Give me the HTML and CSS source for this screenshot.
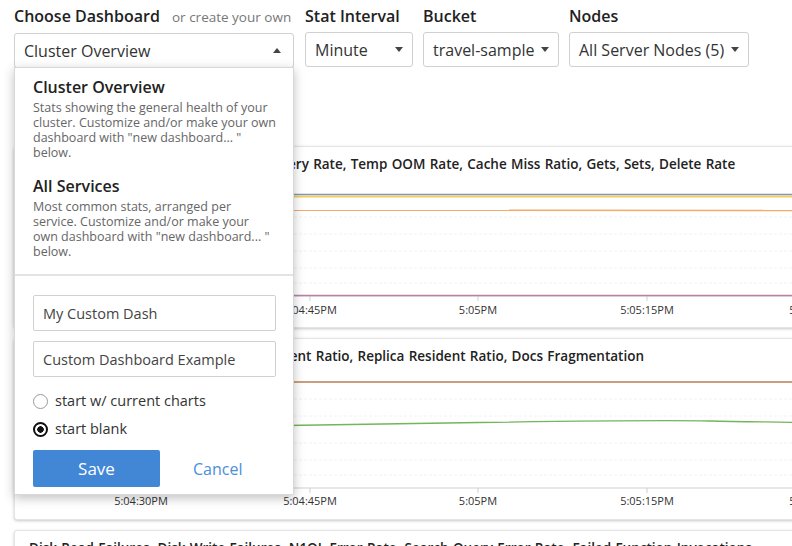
FILE: index.html
```html
<!DOCTYPE html>
<html lang="en">

<head>
    <meta charset="UTF-8">
    <meta name="viewport" content="width=device-width, initial-scale=1.0">
    <title>Dashboard</title>
    <link rel="stylesheet" href="styles.css">
</head>

<body>
    <div class="toolbar">
        <div class="field field-dash">
            <div class="label">Choose Dashboard <small>or create your own</small></div>
            <div class="select open">Cluster Overview <span class="caret up"></span></div>
        </div>
        <div class="field field-interval">
            <div class="label">Stat Interval</div>
            <div class="select">Minute <span class="caret"></span></div>
        </div>
        <div class="field field-bucket">
            <div class="label">Bucket</div>
            <div class="select">travel-sample <span class="caret"></span></div>
        </div>
        <div class="field field-nodes">
            <div class="label">Nodes</div>
            <div class="select">All Server Nodes (5) <span class="caret"></span></div>
        </div>
    </div>

    <div class="charts">
        <div class="card">
            <div class="card-title">Total Ops, Memory Use, Disk Fill, Recovery Rate, Temp OOM Rate, Cache Miss Ratio, Gets, Sets, Delete Rate</div>
            <svg class="chart" width="790" height="148" viewBox="0 0 790 148">
                <g class="grid">
                    <line x1="30" y1="44" x2="790" y2="44" />
                    <line x1="30" y1="61" x2="790" y2="61" />
                    <line x1="30" y1="78" x2="790" y2="78" />
                    <line x1="30" y1="95" x2="790" y2="95" />
                    <line x1="30" y1="110" x2="790" y2="110" />
                </g>
                <line x1="30" y1="21.5" x2="790" y2="21.5" stroke="#7a98c6" stroke-width="1.5" />
                <line x1="30" y1="23.5" x2="790" y2="23.5" stroke="#f3cd5e" stroke-width="1.8" />
                <line x1="30" y1="37" x2="790" y2="37.5" stroke="#f2ab6a" stroke-width="1.5" />
                <g class="axis">
                    <line x1="30" y1="123" x2="790" y2="123" />
                    <line x1="112" y1="123" x2="112" y2="128" />
                    <line x1="281" y1="123" x2="281" y2="128" />
                    <line x1="449" y1="123" x2="449" y2="128" />
                    <line x1="618" y1="123" x2="618" y2="128" />
                    <line x1="787" y1="123" x2="787" y2="128" />
                </g>
                <line x1="30" y1="122.5" x2="790" y2="122.5" stroke="#b781a4" stroke-width="1.5" />
                <g class="ticks">
                    <text x="112" y="141">5:04:30PM</text>
                    <text x="281" y="141">5:04:45PM</text>
                    <text x="449" y="141">5:05PM</text>
                    <text x="618" y="141">5:05:15PM</text>
                    <text x="787" y="141">5:05:30PM</text>
                </g>
            </svg>
        </div>

        <div class="card">
            <div class="card-title">Memory used, Disk Queue, Active Resident Ratio, Replica Resident Ratio, Docs Fragmentation</div>
            <svg class="chart" width="790" height="148" viewBox="0 0 790 148">
                <g class="grid">
                    <line x1="30" y1="34" x2="790" y2="34" />
                    <line x1="30" y1="51" x2="790" y2="51" />
                    <line x1="30" y1="78" x2="790" y2="78" />
                    <line x1="30" y1="95" x2="790" y2="95" />
                    <line x1="30" y1="110" x2="790" y2="110" />
                </g>
                <line x1="30" y1="17" x2="790" y2="17" stroke="#c9a07c" stroke-width="1.8" />
                <path d="M30 64 C 200 61, 350 59, 450 57.5 S 640 55, 680 56 S 760 57, 790 58" fill="none" stroke="#72b55a" stroke-width="1.3" />
                <g class="axis">
                    <line x1="30" y1="123" x2="790" y2="123" />
                    <line x1="112" y1="123" x2="112" y2="128" />
                    <line x1="281" y1="123" x2="281" y2="128" />
                    <line x1="449" y1="123" x2="449" y2="128" />
                    <line x1="618" y1="123" x2="618" y2="128" />
                    <line x1="787" y1="123" x2="787" y2="128" />
                </g>
                <g class="ticks">
                    <text x="112" y="140">5:04:30PM</text>
                    <text x="281" y="140">5:04:45PM</text>
                    <text x="449" y="140">5:05PM</text>
                    <text x="618" y="140">5:05:15PM</text>
                    <text x="787" y="140">5:05:30PM</text>
                </g>
            </svg>
        </div>

        <div class="card">
            <div class="card-title">Disk Read Failures, Disk Write Failures, N1QL Error Rate, Search Query Error Rate, Failed Function Invocations</div>
        </div>
    </div>

    <div class="menu">
        <div class="menu-item">
            <div class="menu-title">Cluster Overview</div>
            <div class="menu-desc">Stats showing the general health of your cluster. Customize and/or make your own dashboard with "new dashboard... " below.</div>
        </div>
        <div class="menu-item">
            <div class="menu-title">All Services</div>
            <div class="menu-desc">Most common stats, arranged per service. Customize and/or make your own dashboard with "new dashboard... " below.</div>
        </div>
        <form class="menu-form">
            <input type="text" value="My Custom Dash">
            <input type="text" value="Custom Dashboard Example">
            <label class="radio"><span class="dot"></span>start w/ current charts</label>
            <label class="radio checked"><span class="dot"></span>start blank</label>
            <div class="actions">
                <button type="button" class="save">Save</button>
                <a href="javascript:void(0);" class="cancel">Cancel</a>
            </div>
        </form>
    </div>
</body>

</html>
```

FILE: styles.css
```css
body {
    font-family: 'Open Sans', 'Liberation Sans', sans-serif;
    background-color: #fff;
    color: #333;
    margin: 0;
    width: 792px;
    height: 546px;
    overflow: hidden;
    position: relative;
}

.toolbar {
    display: flex;
    gap: 10px;
    padding: 6px 14px 0;
}

.field {
    display: flex;
    flex-direction: column;
}

.field-dash { width: 280px; margin-right: 1px; }
.field-interval { width: 108px; }
.field-bucket { width: 136px; }
.field-nodes { width: 180px; }

.label {
    font-size: 16px;
    font-weight: 600;
    line-height: 20px;
    color: #222;
    margin-bottom: 6px;
    white-space: nowrap;
}

.label small {
    font-size: 13.5px;
    font-weight: 400;
    color: #777;
    margin-left: 8px;
}

.select {
    height: 35px;
    box-sizing: border-box;
    border: 1px solid #d0d0d0;
    border-radius: 3px;
    padding: 0 9px;
    display: flex;
    align-items: center;
    justify-content: space-between;
    font-size: 16px;
    color: #333;
    white-space: nowrap;
}

.caret {
    width: 0;
    height: 0;
    border-left: 4.5px solid transparent;
    border-right: 4.5px solid transparent;
    border-top: 5px solid #444;
}

.caret.up {
    border-top: none;
    border-bottom: 5px solid #444;
    margin-right: 3px;
}

.charts {
    margin-top: 78px;
    padding-left: 14px;
}

.card {
    width: 820px;
    background: #fff;
    border: 1px solid #e4e4e4;
    border-radius: 3px;
    box-shadow: 0 1px 3px rgba(0, 0, 0, 0.22);
    padding: 8px 0 6px 14px;
    margin-bottom: 10px;
    box-sizing: border-box;
}

.card-title {
    font-size: 13.5px;
    font-weight: 600;
    line-height: 18px;
    word-spacing: 0.8px;
    color: #222;
    white-space: nowrap;
}

.chart {
    display: block;
}

.grid line {
    stroke: #f2f2f2;
    stroke-dasharray: 3 2;
}

.axis line {
    stroke: #cfcfcf;
    stroke-width: 1;
}

.ticks text {
    font-family: 'Open Sans', 'Liberation Sans', sans-serif;
    font-size: 11px;
    fill: #333;
    text-anchor: middle;
}

.menu {
    position: absolute;
    top: 67px;
    left: 14px;
    width: 280px;
    box-sizing: border-box;
    background: #fff;
    border: 1px solid #d8d8d8;
    box-shadow: 0 3px 10px rgba(0, 0, 0, 0.25);
}

.menu-item {
    padding: 9px 0 0 18px;
}

.menu-item + .menu-item {
    padding-top: 16px;
    padding-bottom: 15px;
}

.menu-title {
    font-size: 16px;
    font-weight: 600;
    line-height: 20px;
    color: #222;
    margin-bottom: 3px;
}

.menu-desc {
    width: 244px;
    font-size: 12.5px;
    line-height: 15px;
    color: #666;
}

.menu-form {
    border-top: 2px solid #e3e3e3;
    padding: 19px 17px 7px 18px;
    display: flex;
    flex-direction: column;
}

.menu-form input {
    height: 36px;
    box-sizing: border-box;
    border: 1px solid #d0d0d0;
    border-radius: 2px;
    padding: 0 9px;
    font-family: 'Open Sans', 'Liberation Sans', sans-serif;
    font-size: 14.5px;
    color: #444;
    margin-bottom: 10px;
    outline: none;
}

.menu-form input + input {
    margin-bottom: 13px;
}

.radio {
    display: flex;
    align-items: center;
    font-size: 14.5px;
    line-height: 22px;
    color: #333;
    margin-bottom: 6px;
}

.dot {
    width: 15px;
    height: 15px;
    box-sizing: border-box;
    border: 1px solid #9a9a9a;
    border-radius: 50%;
    margin-right: 7px;
}

.radio.checked .dot {
    border: 2px solid #111;
    background: radial-gradient(circle, #111 0 3px, #fff 3.5px);
}

.actions {
    display: flex;
    align-items: center;
    margin-top: 4px;
}

.save {
    width: 127px;
    height: 37px;
    background-color: #4287d6;
    color: #fff;
    border: none;
    border-radius: 2px;
    font-family: 'Open Sans', 'Liberation Sans', sans-serif;
    font-size: 17px;
    cursor: pointer;
}

.cancel {
    margin-left: 33px;
    font-size: 16px;
    color: #4a8fd8;
    text-decoration: none;
}
```
